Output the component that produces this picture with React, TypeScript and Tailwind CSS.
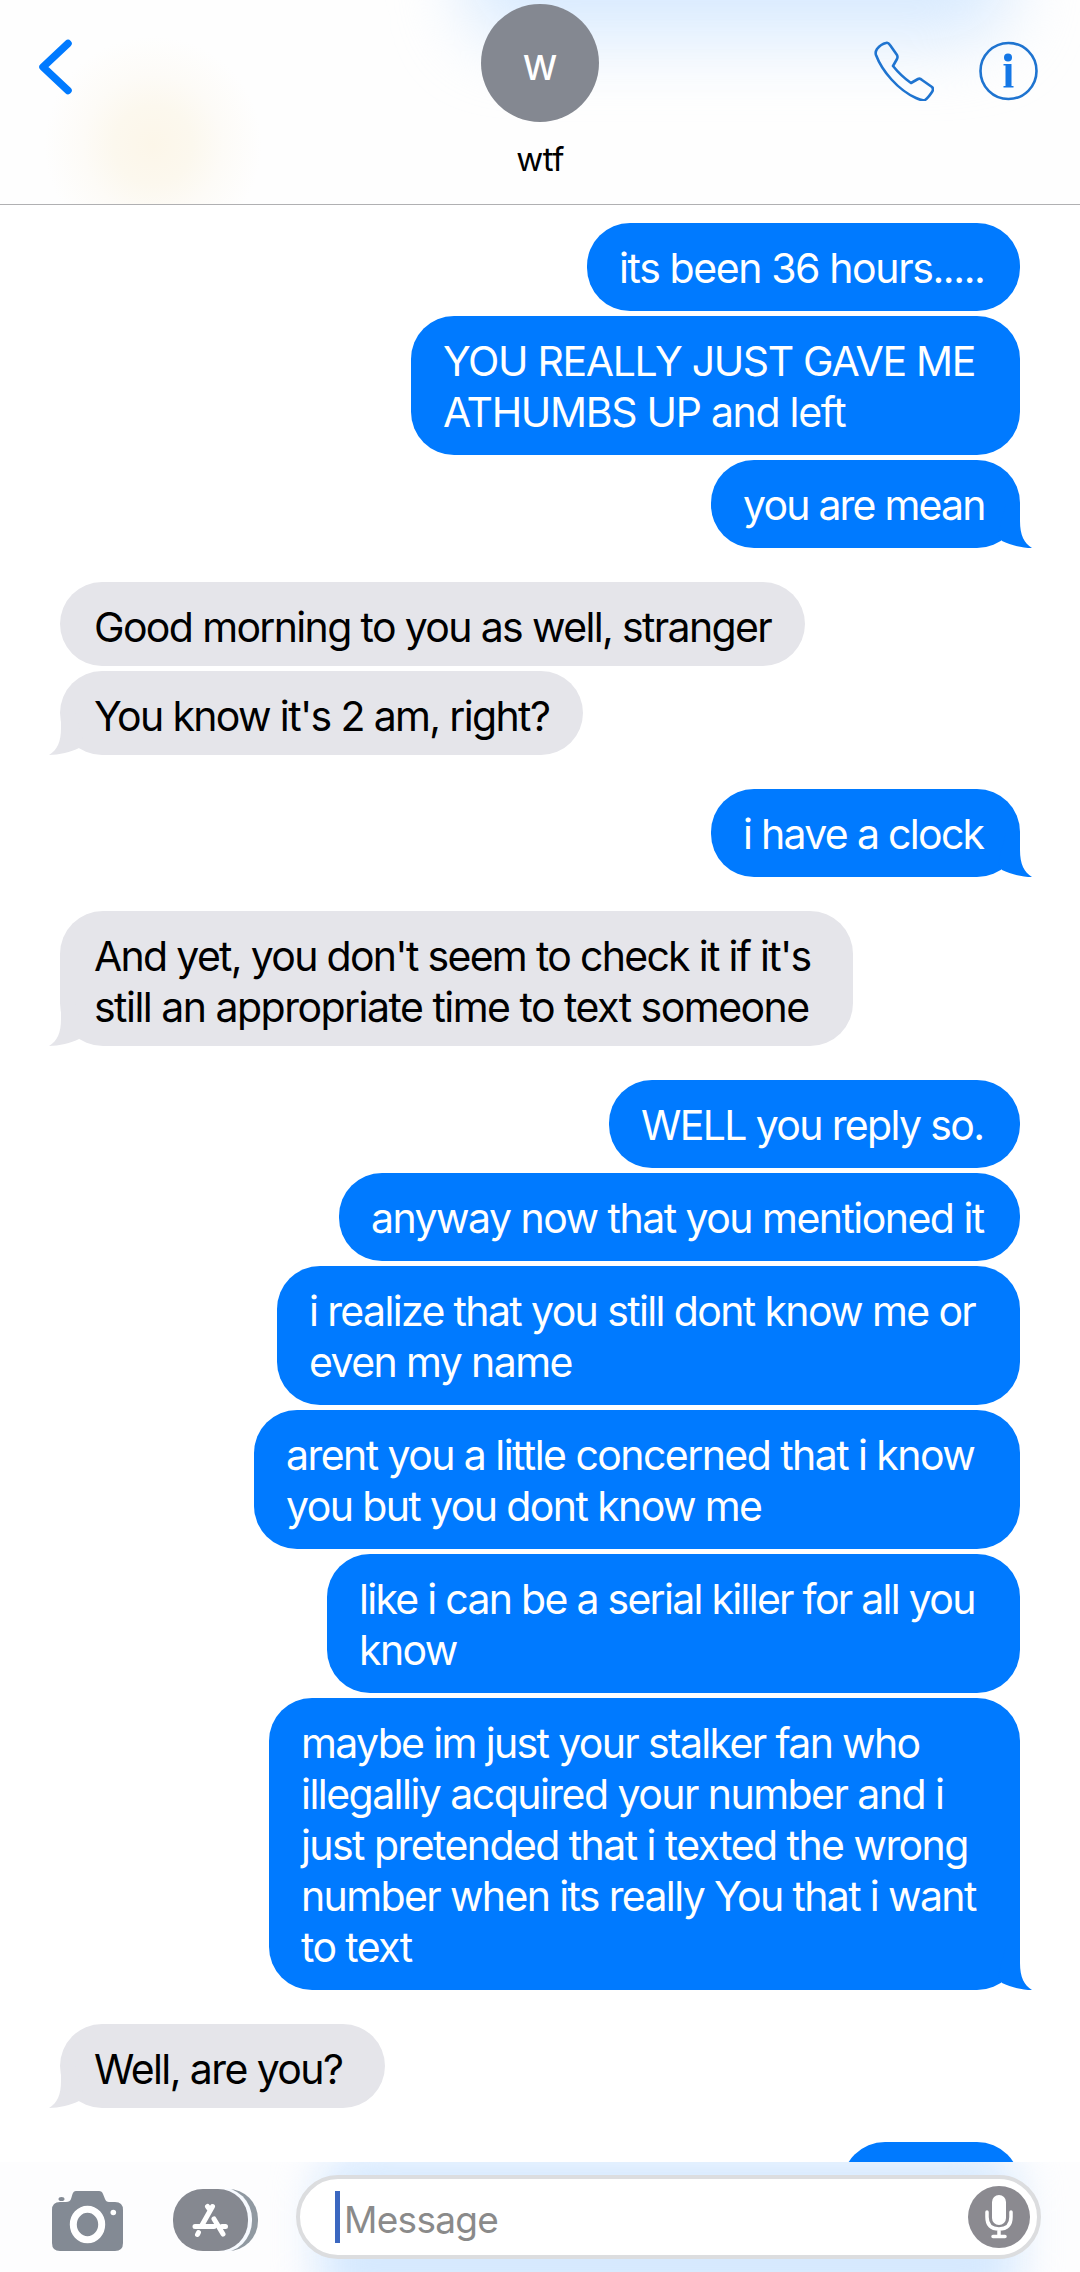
type Line = [text: string, tracking: string];

type Message = {
  mine?: boolean;
  lines: Line[];
  size: string;
  tail?: boolean;
  gap: string;
};

const messages: Message[] = [
  { mine: true, lines: [['its been 36 hours.....', 'tracking-[-1.4px]']], size: 'w-[433px] h-[88px]', gap: 'mt-[18px]' },
  {
    mine: true,
    lines: [
      ['YOU REALLY JUST GAVE ME', 'tracking-[-1.35px]'],
      ['ATHUMBS UP and left', 'tracking-[-1.3px]'],
    ],
    size: 'w-[609px] h-[139px]',
    gap: 'mt-[5px]',
  },
  { mine: true, lines: [['you are mean', 'tracking-[-1.8px]']], size: 'w-[309px] h-[88px]', tail: true, gap: 'mt-[5px]' },
  { lines: [['Good morning to you as well, stranger', 'tracking-[-1.65px]']], size: 'w-[745px] h-[84px]', gap: 'mt-[34px]' },
  { lines: [["You know it's 2 am, right?", 'tracking-[-1.65px]']], size: 'w-[523px] h-[84px]', tail: true, gap: 'mt-[5px]' },
  { mine: true, lines: [['i have a clock', 'tracking-[-1.7px]']], size: 'w-[309px] h-[88px]', tail: true, gap: 'mt-[34px]' },
  {
    lines: [
      ["And yet, you don't seem to check it if it's", 'tracking-[-1.7px]'],
      ['still an appropriate time to text someone', 'tracking-[-1.52px]'],
    ],
    size: 'w-[793px] h-[135px]',
    tail: true,
    gap: 'mt-[34px]',
  },
  { mine: true, lines: [['WELL you reply so.', 'tracking-[-1.65px]']], size: 'w-[411px] h-[88px]', gap: 'mt-[34px]' },
  { mine: true, lines: [['anyway now that you mentioned it', 'tracking-[-1.53px]']], size: 'w-[681px] h-[88px]', gap: 'mt-[5px]' },
  {
    mine: true,
    lines: [
      ['i realize that you still dont know me or', 'tracking-[-1.63px]'],
      ['even my name', 'tracking-[-1.6px]'],
    ],
    size: 'w-[743px] h-[139px]',
    gap: 'mt-[5px]',
  },
  {
    mine: true,
    lines: [
      ['arent you a little concerned that i know', 'tracking-[-1.56px]'],
      ['you but you dont know me', 'tracking-[-1.6px]'],
    ],
    size: 'w-[766px] h-[139px]',
    gap: 'mt-[5px]',
  },
  {
    mine: true,
    lines: [
      ['like i can be a serial killer for all you', 'tracking-[-1.72px]'],
      ['know', 'tracking-[-1.6px]'],
    ],
    size: 'w-[693px] h-[139px]',
    gap: 'mt-[5px]',
  },
  {
    mine: true,
    lines: [
      ['maybe im just your stalker fan who', 'tracking-[-1.65px]'],
      ['illegalliy acquired your number and i', 'tracking-[-1.54px]'],
      ['just pretended that i texted the wrong', 'tracking-[-1.57px]'],
      ['number when its really You that i want', 'tracking-[-1.64px]'],
      ['to text', 'tracking-[-1.6px]'],
    ],
    size: 'w-[751px] h-[292px]',
    tail: true,
    gap: 'mt-[5px]',
  },
  { lines: [['Well, are you?', 'tracking-[-1.6px]']], size: 'w-[325px] h-[84px]', tail: true, gap: 'mt-[34px]' },
  { mine: true, lines: [], size: 'w-[178px] h-[88px]', gap: 'mt-[34px]' },
];

const Bubble = ({ mine, lines, size, tail, gap }: Message) => (
  <div
    className={`relative shrink-0 whitespace-nowrap rounded-[43px] text-[41px] leading-[51px] ${size} ${gap} ${
      mine ? 'self-end bg-[#007aff] pl-[32px] pt-[20px] text-white' : 'self-start bg-[#e5e5ea] pl-[34px] pt-[20px] text-black'
    }`}
  >
    {lines.map(([text, tracking]) => (
      <div key={text} className={tracking}>
        {text}
      </div>
    ))}
    {tail && (
      <svg
        className={`absolute bottom-0 h-[44px] w-[40px] ${mine ? '-right-[12px]' : '-left-[11px] -scale-x-100'}`}
        viewBox="0 0 40 44"
        fill={mine ? '#007aff' : '#e5e5ea'}
      >
        <path d="M14 0H28V17C28 31 32 39 40 44C30 44 18 41 10 37L6 30Z" />
      </svg>
    )}
  </div>
);

const Header = () => (
  <header className="relative flex h-[205px] shrink-0 items-start justify-between overflow-hidden border-b border-[#b0b0b2] bg-[#fefefe]">
    <div className="absolute -top-[90px] left-[465px] h-[130px] w-[545px] rounded-[50px] bg-[#d8eafe] blur-[34px]" />
    <div className="absolute left-[43px] top-[35px] h-[220px] w-[220px] bg-[radial-gradient(circle,#fcf6e9_0%,#fcf8ee_25%,#fdfbf7_45%,#fefefe00_70%)]" />
    <div className="relative flex w-[400px] pl-[38px] pt-[39px]">
      <svg className="h-[58px] w-[36px]" viewBox="0 0 36 58" fill="none" stroke="#007aff" strokeWidth="7.5" strokeLinecap="round" strokeLinejoin="round">
        <path d="M30 4.500L5 28L30 51.500" />
      </svg>
    </div>
    <div className="relative flex flex-col items-center pt-[4px]">
      <div className="flex h-[118px] w-[118px] items-center justify-center rounded-full bg-[#848891] pt-[9px] text-[34px] font-medium text-white">W</div>
      <div className="mt-[15px] text-[33px] leading-[44px] tracking-[-0.5px] text-black">wtf</div>
    </div>
    <div className="relative flex w-[400px] justify-end gap-[45px] pr-[41px] pt-[41px]">
      <svg className="h-[60px] w-[60px]" viewBox="0 0 60 60" fill="none" stroke="#1f74d0" strokeWidth="2.6" strokeLinejoin="round">
        <path d="M3 8Q7 3 12 2Q14 1 16 4L23 14Q24 16 23 18L19 25Q27 35 37 42L44 38Q46 37 48 39L58 46Q60 48 58 51Q54 57 51 59Q48 60 42 57C24 49 8 30 2 14Q1 11 3 8Z" />
      </svg>
      <svg className="h-[60px] w-[60px]" viewBox="0 0 60 60" fill="#1477e6">
        <circle cx="29.5" cy="30" r="28" fill="none" stroke="#1f74d0" strokeWidth="2.6" />
        <circle cx="29" cy="16.5" r="4" />
        <path d="M24.500 23H32.500V45H34.500V46.500H24.500V45H26.500V24.500H24.500Z" />
      </svg>
    </div>
  </header>
);

const CameraIcon = () => (
  <svg className="h-[60px] w-[71px]" viewBox="0 0 71 60" fill="#838a94">
    <ellipse cx="9.5" cy="8" rx="3" ry="2" />
    <path d="M24 0H47Q50 0 51 3L53 8Q54 11 57 11H63Q71 11 71 19V52Q71 60 63 60H8Q0 60 0 52V19Q0 11 8 11H14Q18 11 19 8L20.500 3Q21.500 0 24 0Z" />
    <ellipse cx="35.5" cy="33.5" rx="14.2" ry="15.2" stroke="#fff" strokeWidth="7" />
    <circle cx="61.3" cy="21.5" r="2.8" fill="#fff" />
  </svg>
);

const AppsIcon = () => (
  <svg className="h-[62px] w-[85px]" viewBox="0 0 85 62">
    <rect x="14" y="0" width="71" height="62" rx="30" fill="#9099a1" />
    <rect x="6" y="-2" width="73" height="66" rx="32" fill="#f7faff" />
    <rect x="0" y="0" width="75" height="62" rx="30" fill="#858890" />
    <g stroke="#fff" strokeWidth="5" strokeLinecap="round" fill="none">
      <path d="M34.500 17.500L37 21M39.500 17.500L28.500 37M22 37.500H41M41 30L50 45M49 37.500H52.500M24.500 45.500L25.500 43.500" />
    </g>
  </svg>
);

const Composer = () => (
  <footer className="relative flex h-[110px] shrink-0 items-start overflow-hidden bg-[#fdfdfe]">
    <div className="absolute -bottom-[40px] -top-[10px] left-[318px] w-[700px] rounded-[40px] bg-[#d6e9fe] blur-[22px]" />
    <div className="relative flex w-full items-start pl-[52px] pr-[39px] pt-[13px]">
      <div className="pt-[16px]">
        <CameraIcon />
      </div>
      <div className="ml-[50px] pt-[14px]">
        <AppsIcon />
      </div>
      <div className="ml-[38px] flex h-[84px] flex-1 items-center rounded-full border-4 border-[#dcdddf] bg-white pl-[35px] pr-[7px]">
        <div className="h-[52px] w-[5px] bg-[#3b67c0]" />
        <div className="ml-[4px] flex-1 pt-[5px] text-[37px] tracking-[-0.7px] text-[#8a8a8a]">Message</div>
        <div className="flex h-[62px] w-[62px] items-center justify-center rounded-full bg-[#8b8a90]">
          <svg className="h-[46px] w-[30px]" viewBox="0 0 30 46" fill="none" stroke="#fff" strokeWidth="3.5" strokeLinecap="round">
            <rect x="8" y="1" width="14" height="30" rx="7" fill="#fff" stroke="none" />
            <path d="M3 18V23Q3 35 15 35Q27 35 27 23V18M15 35V42M9 42.500H21" />
          </svg>
        </div>
      </div>
    </div>
  </footer>
);

export default function App() {
  return (
    <div className="flex h-[2272px] w-[1080px] flex-col overflow-hidden bg-white font-['Inter','Liberation_Sans',sans-serif]">
      <Header />
      <main className="flex min-h-0 flex-1 flex-col overflow-hidden px-[60px]">
        {messages.map((message, i) => (
          <Bubble key={i} {...message} />
        ))}
      </main>
      <Composer />
    </div>
  );
}
